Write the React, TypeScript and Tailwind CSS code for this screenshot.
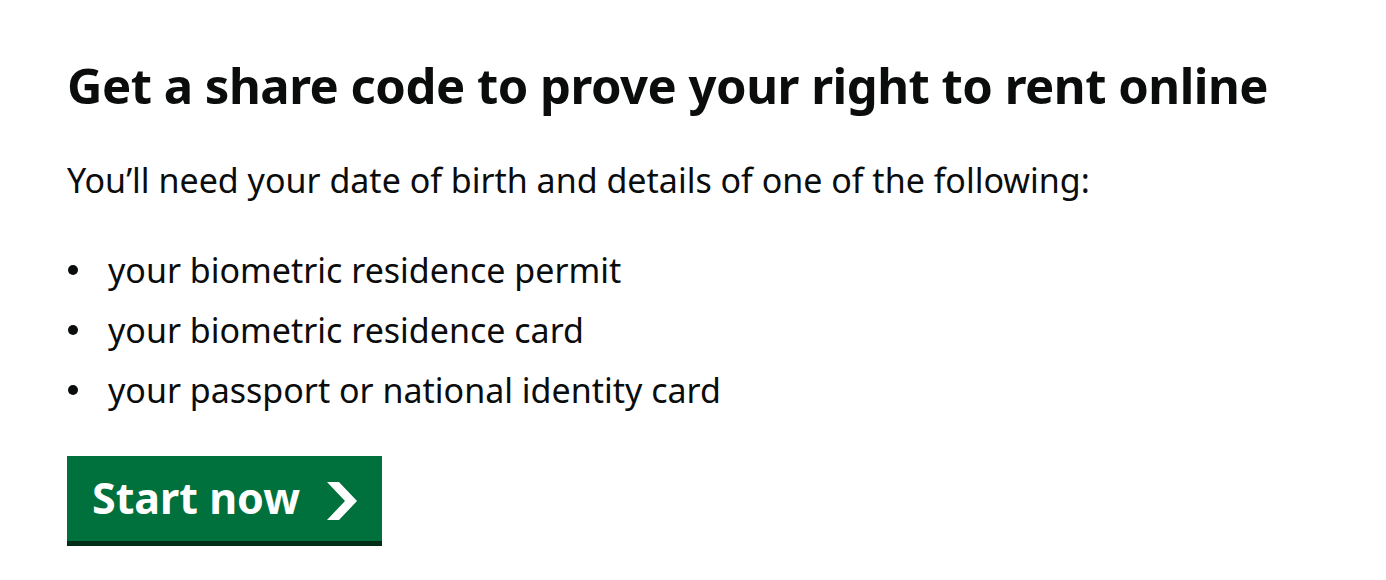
const items = [
  'your biometric residence permit',
  'your biometric residence card',
  'your passport or national identity card',
];

export default function App() {
  return (
    <div className="min-h-[580px] bg-white text-[#0b0c0c] pl-[67px] pt-[50px]" style={{ fontFamily: '"Noto Sans", Arial, sans-serif' }}>
      <h1 className="text-[49px] font-bold leading-[70px] tracking-[-0.5px]">
        Get a share code to prove your right to rent online
      </h1>
      <p className="mt-[38px] text-[34px] leading-[44px]">
        You’ll need your date of birth and details of one of the following:
      </p>
      <ul className="mt-[38px] flex flex-col">
        {items.map((item) => (
          <li key={item} className="flex items-center text-[34px] leading-[60px]">
            <span className="w-[10px] h-[10px] rounded-full bg-[#0b0c0c] ml-[1px] mr-[30px]" />
            {item}
          </li>
        ))}
      </ul>
      <button className="mt-[36px] flex items-center gap-[25px] h-[85px] w-[315px] pl-[25px] bg-[#00703c] text-white text-[43px] font-bold shadow-[0_5px_0_#002d18]">
        Start now
        <svg width="32" height="38" viewBox="0 0 32 38" className="mt-[4px]">
          <path d="M2 0h12l18 19-18 19H2l18-19z" fill="white" />
        </svg>
      </button>
    </div>
  );
}
